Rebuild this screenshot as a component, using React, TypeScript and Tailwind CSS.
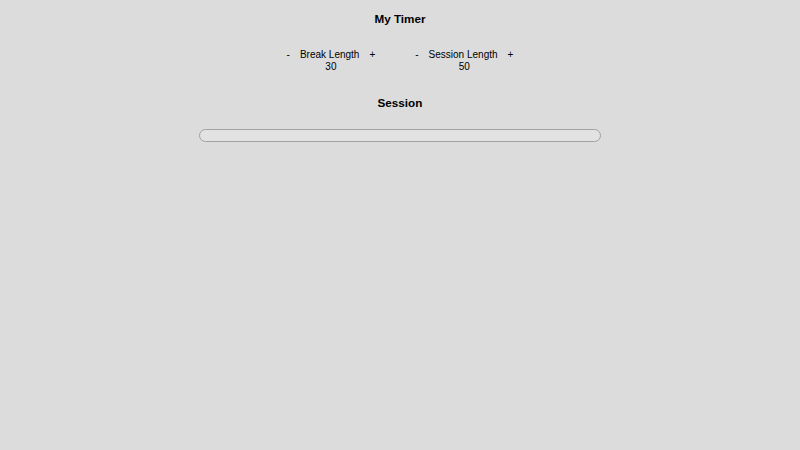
export default function App() {
  return (
    <div
      className="min-h-[450px] w-full bg-[#dcdcdc] text-black flex flex-col items-center"
      style={{ fontFamily: '"Liberation Sans", Arial, sans-serif' }}
    >
      <h1 className="mt-[12px] text-[11.7px] font-bold leading-[13px]">My Timer</h1>

      <div className="mt-[24px] flex gap-[40px] text-[10px] leading-[11.5px]">
        <div className="flex flex-col items-center">
          <div className="flex gap-[10px]">
            <span>-</span>
            <span>Break Length</span>
            <span>+</span>
          </div>
          <span>30</span>
        </div>
        <div className="flex flex-col items-center">
          <div className="flex gap-[10px]">
            <span>-</span>
            <span>Session Length</span>
            <span>+</span>
          </div>
          <span>50</span>
        </div>
      </div>

      <h2 className="mt-[24px] text-[11.7px] font-bold leading-[13px]">Session</h2>

      <div className="mt-[20px] h-[13px] w-[402px] rounded-full border border-[#a2a2a2] bg-[#e2e2e2]" />
    </div>
  );
}
